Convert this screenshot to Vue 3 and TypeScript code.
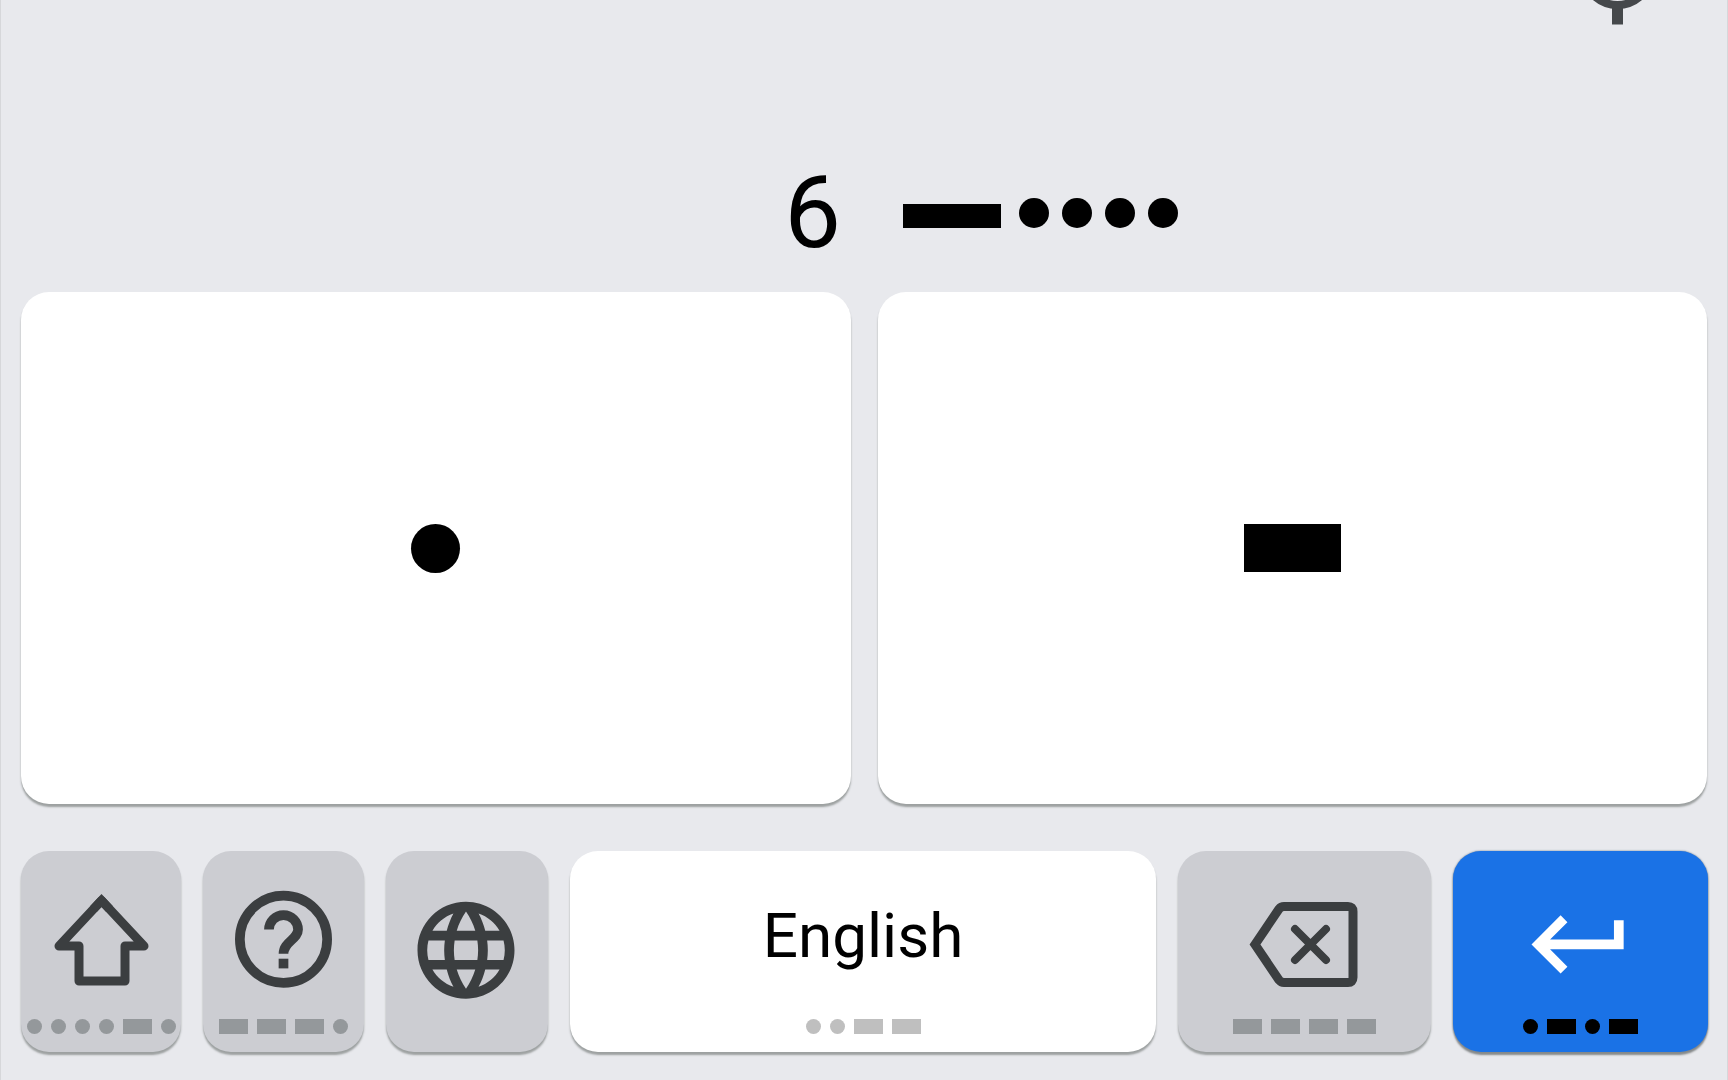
<script setup lang="ts">
type Mark = '.' | '-'
type IconName = 'shift' | 'help' | 'globe' | 'backspace' | 'enter'

interface Key {
  id: string
  label: string
  tone: 'grey' | 'white' | 'blue'
  icon?: IconName
  code: Mark[]
}

const parse = (code: string): Mark[] => code.split('') as Mark[]

const typed = { character: '6', code: parse('-....') }

const keys: Key[] = [
  { id: 'shift', label: 'Shift', tone: 'grey', icon: 'shift', code: parse('....-.') },
  { id: 'help', label: 'Help', tone: 'grey', icon: 'help', code: parse('---.') },
  { id: 'globe', label: 'Change language', tone: 'grey', icon: 'globe', code: [] },
  { id: 'space', label: 'English', tone: 'white', code: parse('..--') },
  { id: 'backspace', label: 'Backspace', tone: 'grey', icon: 'backspace', code: parse('----') },
  { id: 'enter', label: 'Enter', tone: 'blue', icon: 'enter', code: parse('.-.-') },
]
</script>

<template>
  <main class="keyboard">
    <header class="top">
      <button class="mic" type="button" aria-label="Voice input">
        <svg width="60" height="25" viewBox="0 0 60 25" aria-hidden="true">
          <circle cx="29.5" cy="-29" r="34" fill="none" stroke="currentColor" stroke-width="8" />
          <path d="M24 5h11v19.5h-11z" fill="currentColor" />
        </svg>
      </button>
      <div class="readout">
        <span class="character">{{ typed.character }}</span>
        <span class="typed-code">
          <i v-for="(m, i) in typed.code" :key="i" :class="m === '.' ? 'dot' : 'dash'"></i>
        </span>
      </div>
    </header>

    <section class="pads">
      <button class="key white" type="button" aria-label="Dot"><i class="pad-dot"></i></button>
      <button class="key white" type="button" aria-label="Dash"><i class="pad-dash"></i></button>
    </section>

    <section class="row">
      <button
        v-for="k in keys"
        :key="k.id"
        class="key small"
        :class="k.tone"
        type="button"
        :aria-label="k.label"
      >
        <svg v-if="k.icon" class="icon" viewBox="0 0 112 108" aria-hidden="true">
          <g v-if="k.icon === 'shift'" fill="none" stroke="currentColor" stroke-width="9">
            <path d="M56.5 8.5 99 54H80V89H34V54H14Z" stroke-linejoin="round" />
            <path d="M48.5 17 56.5 8.5 64.5 17" />
          </g>
          <g v-else-if="k.icon === 'help'" transform="translate(-2.7 -10.9) scale(4.85)">
            <circle cx="12" cy="12" r="9" fill="none" stroke="currentColor" stroke-width="2" />
            <path
              d="M9 10a3 3 0 0 1 6 0c0 2-3 2.5-3 5"
              fill="none"
              stroke="currentColor"
              stroke-width="2"
            />
            <path d="M11 16h2v2h-2z" fill="currentColor" />
          </g>
          <path
            v-else-if="k.icon === 'globe'"
            transform="translate(-3.2 0) scale(4.85)"
            fill="currentColor"
            d="M11.99 2C6.47 2 2 6.48 2 12s4.47 10 9.99 10C17.52 22 22 17.52 22 12S17.52 2 11.99 2zm6.93 6h-2.95c-.32-1.25-.78-2.45-1.38-3.56 1.84.63 3.37 1.91 4.33 3.56zM12 4.04c.83 1.2 1.48 2.53 1.91 3.96h-3.82c.43-1.43 1.08-2.76 1.91-3.96zM4.26 14C4.1 13.36 4 12.69 4 12s.1-1.36.26-2h3.38c-.08.66-.14 1.32-.14 2 0 .68.06 1.34.14 2H4.26zm.82 2h2.95c.32 1.25.78 2.45 1.38 3.56-1.84-.63-3.37-1.9-4.33-3.56zm2.95-8H5.08c.96-1.66 2.49-2.93 4.33-3.56C8.81 5.55 8.35 6.75 8.03 8zM12 19.96c-.83-1.2-1.48-2.53-1.91-3.96h3.82c-.43 1.43-1.08 2.76-1.91 3.96zM14.34 14H9.66c-.09-.66-.16-1.32-.16-2 0-.68.07-1.35.16-2h4.68c.09.65.16 1.32.16 2 0 .68-.07 1.34-.16 2zm.25 5.56c.6-1.11 1.06-2.31 1.38-3.56h2.95c-.96 1.65-2.49 2.93-4.33 3.56zM16.36 14c.08-.66.14-1.32.14-2 0-.68-.06-1.34-.14-2h3.38c.16.64.26 1.31.26 2s-.1 1.36-.26 2h-3.38z"
          />
          <g v-else-if="k.icon === 'backspace'" fill="none" stroke="currentColor">
            <path
              d="M6 52.5 30 17Q32 14.5 35 14.5H99Q104 14.5 104 19.5V85.500Q104 90.500 99 90.500H35Q32 90.500 30 88Z"
              stroke-width="9"
            />
            <path d="M46 37 77 68M77 37 46 68" stroke-width="8" stroke-linecap="round" />
          </g>
          <path
            v-else
            transform="translate(-3.2 -5.8) scale(4.85)"
            fill="currentColor"
            d="M19 7v4H5.83l3.58-3.59L8 6l-6 6 6 6 1.41-1.41L5.83 13H21V7z"
          />
        </svg>
        <span v-else class="label">{{ k.label }}</span>
        <span v-if="k.code.length" class="hint">
          <i v-for="(m, i) in k.code" :key="i" :class="m === '.' ? 'dot' : 'dash'"></i>
        </span>
      </button>
    </section>
  </main>
</template>

<style>
body {
  margin: 0;
  background: #e8e9ed;
}
</style>

<style scoped>
.keyboard {
  box-sizing: border-box;
  min-height: 100vh;
  display: flex;
  flex-direction: column;
  padding-bottom: 28px;
  background: #e8e9ed;
  box-shadow: inset 1px 0 #d6d7da, inset -1px 0 #d6d7da;
  font-family: Roboto, "Liberation Sans", sans-serif;
  color: #000;
}

button {
  border: 0;
  padding: 0;
  margin: 0;
  font: inherit;
  color: inherit;
  cursor: pointer;
}

i {
  display: block;
  flex: none;
}

.top {
  display: flex;
  flex-direction: column;
}

.mic {
  align-self: flex-end;
  margin-right: 80px;
  background: none;
  color: #45484b;
}

.mic svg {
  display: block;
}

.readout {
  display: flex;
  align-items: center;
  gap: 55px;
  padding: 128px 0 19px 45%;
}

.character {
  width: 70px;
  text-align: center;
  font-size: 101px;
  line-height: 120px;
}

.typed-code {
  display: flex;
  align-items: flex-end;
  gap: 13px;
}

.typed-code .dot {
  width: 30px;
  height: 30px;
  border-radius: 50%;
  background: #000;
}

.typed-code .dash {
  width: 98px;
  height: 24px;
  margin-right: 5px;
  background: #000;
}

.pads {
  flex: 1;
  display: grid;
  grid-template-columns: 1fr 1fr;
  gap: 27px;
  padding: 0 21px;
}

.key {
  display: flex;
  align-items: center;
  justify-content: center;
  border-radius: 28px;
  box-shadow: 0 3px 2px #9da1a1;
}

.white {
  background: #fff;
}

.grey {
  background: #cccdd2;
  color: #3b3e40;
}

.blue {
  background: #1a72e6;
  color: #fff;
  box-shadow: 0 3px 2px #85898a, 0 0 2px #5b7085;
}

.pad-dot {
  width: 49px;
  height: 49px;
  border-radius: 50%;
  background: #000;
}

.pad-dash {
  width: 97px;
  height: 48px;
  background: #000;
}

.row {
  display: grid;
  grid-template-columns: 160fr 161fr 162fr 586fr 253fr 255fr;
  gap: 22px;
  margin-top: 47px;
  padding: 0 20px 0 21px;
}

.small {
  flex-direction: column;
  justify-content: flex-start;
  min-width: 0;
  min-height: 201px;
  padding-top: 41px;
}

.icon {
  display: block;
  width: 112px;
  height: 108px;
  flex: none;
  overflow: visible;
}

.label {
  margin-bottom: 20px;
  font-size: 62px;
  line-height: 88px;
}

.hint {
  display: flex;
  gap: 9px;
  margin-top: 19px;
  color: #94989b;
}

.white .hint {
  color: #bfbfbf;
}

.blue .hint {
  color: #000;
}

.hint .dot {
  width: 15px;
  height: 15px;
  border-radius: 50%;
  background: currentColor;
}

.hint .dash {
  width: 29px;
  height: 15px;
  background: currentColor;
}
</style>
